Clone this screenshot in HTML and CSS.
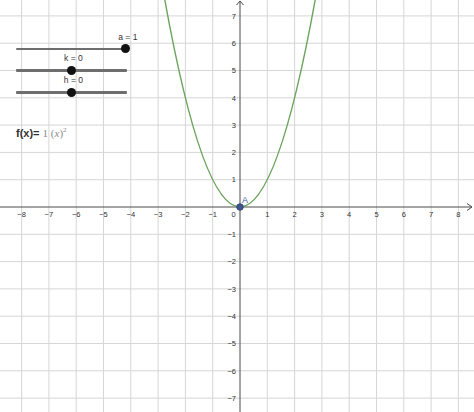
FILE: index.html
```html
<!DOCTYPE html>
<html>
<head>
<meta charset="utf-8">
<link rel="stylesheet" href="styles.css">
</head>
<body>
<div class="view">
  <svg class="graph" width="474" height="412" viewBox="0 0 474 412" xmlns="http://www.w3.org/2000/svg">
    <g class="grid">
      <line x1="21.6" y1="0" x2="21.6" y2="412"/>
      <line x1="48.9" y1="0" x2="48.9" y2="412"/>
      <line x1="76.2" y1="0" x2="76.2" y2="412"/>
      <line x1="103.5" y1="0" x2="103.5" y2="412"/>
      <line x1="130.8" y1="0" x2="130.8" y2="412"/>
      <line x1="158.1" y1="0" x2="158.1" y2="412"/>
      <line x1="185.4" y1="0" x2="185.4" y2="412"/>
      <line x1="212.7" y1="0" x2="212.7" y2="412"/>
      <line x1="267.3" y1="0" x2="267.3" y2="412"/>
      <line x1="294.6" y1="0" x2="294.6" y2="412"/>
      <line x1="321.9" y1="0" x2="321.9" y2="412"/>
      <line x1="349.2" y1="0" x2="349.2" y2="412"/>
      <line x1="376.5" y1="0" x2="376.5" y2="412"/>
      <line x1="403.8" y1="0" x2="403.8" y2="412"/>
      <line x1="431.1" y1="0" x2="431.1" y2="412"/>
      <line x1="458.4" y1="0" x2="458.4" y2="412"/>
      <line x1="0" y1="15.9" x2="474" y2="15.9"/>
      <line x1="0" y1="43.2" x2="474" y2="43.2"/>
      <line x1="0" y1="70.5" x2="474" y2="70.5"/>
      <line x1="0" y1="97.8" x2="474" y2="97.8"/>
      <line x1="0" y1="125.1" x2="474" y2="125.1"/>
      <line x1="0" y1="152.4" x2="474" y2="152.4"/>
      <line x1="0" y1="179.7" x2="474" y2="179.7"/>
      <line x1="0" y1="234.3" x2="474" y2="234.3"/>
      <line x1="0" y1="261.6" x2="474" y2="261.6"/>
      <line x1="0" y1="288.9" x2="474" y2="288.9"/>
      <line x1="0" y1="316.2" x2="474" y2="316.2"/>
      <line x1="0" y1="343.5" x2="474" y2="343.5"/>
      <line x1="0" y1="370.8" x2="474" y2="370.8"/>
      <line x1="0" y1="398.1" x2="474" y2="398.1"/>
    </g>
    <g class="axis">
      <line x1="0" y1="207" x2="472" y2="207"/>
      <polyline points="467,203.5 472,207 467,210.5"/>
      <line x1="240" y1="412" x2="240" y2="1"/>
      <polyline points="236.5,5 240,1 243.5,5"/>
    </g>
    <g class="xlabels">
      <text x="21.6" y="217">−8</text>
      <text x="48.9" y="217">−7</text>
      <text x="76.2" y="217">−6</text>
      <text x="103.5" y="217">−5</text>
      <text x="130.8" y="217">−4</text>
      <text x="158.1" y="217">−3</text>
      <text x="185.4" y="217">−2</text>
      <text x="212.7" y="217">−1</text>
      <text x="233.5" y="217">0</text>
      <text x="267.3" y="217">1</text>
      <text x="294.6" y="217">2</text>
      <text x="321.9" y="217">3</text>
      <text x="349.2" y="217">4</text>
      <text x="376.5" y="217">5</text>
      <text x="403.8" y="217">6</text>
      <text x="431.1" y="217">7</text>
      <text x="458.4" y="217">8</text>
    </g>
    <g class="ylabels">
      <text x="236" y="18.6">7</text>
      <text x="236" y="45.9">6</text>
      <text x="236" y="73.2">5</text>
      <text x="236" y="100.5">4</text>
      <text x="236" y="127.8">3</text>
      <text x="236" y="155.1">2</text>
      <text x="236" y="182.4">1</text>
      <text x="236" y="237">−1</text>
      <text x="236" y="264.3">−2</text>
      <text x="236" y="291.6">−3</text>
      <text x="236" y="318.9">−4</text>
      <text x="236" y="346.2">−5</text>
      <text x="236" y="373.5">−6</text>
      <text x="236" y="400.8">−7</text>
    </g>
    <path class="curve" d="M 163.56 -7.03 Q 240 421.03 316.44 -7.03"/>
    <circle class="point" cx="240" cy="207" r="3.3"/>
    <text class="plabel" x="242" y="203">A</text>
  </svg>

  <div class="panel">
    <div class="slider">
      <div class="slabel" style="margin-left: 99%">a = 1</div>
      <div class="track"><span class="thumb" style="left: 99%"></span></div>
    </div>
    <div class="slider">
      <div class="slabel" style="margin-left: 50%">k = 0</div>
      <div class="track"><span class="thumb" style="left: 50%"></span></div>
    </div>
    <div class="slider">
      <div class="slabel" style="margin-left: 50%">h = 0</div>
      <div class="track"><span class="thumb" style="left: 50%"></span></div>
    </div>
    <div class="formula"><span class="fname">f(x)=</span> <span class="fexpr">1 (<i>x</i>)<sup>2</sup></span></div>
  </div>
</div>
</body>
</html>
```
FILE: styles.css
```css
html, body {
  margin: 0;
  padding: 0;
  background: #ffffff;
}

.view {
  position: relative;
  width: 474px;
  height: 412px;
  overflow: hidden;
  font-family: "Liberation Sans", Arial, sans-serif;
}

.graph {
  display: block;
}

.grid line {
  stroke: #d6d6d6;
  stroke-width: 1;
}

.axis line,
.axis polyline {
  stroke: #4a4a4a;
  stroke-width: 1;
  fill: none;
}

.xlabels text,
.ylabels text {
  font-family: "Liberation Sans", Arial, sans-serif;
  font-size: 7.5px;
  fill: #333333;
}

.xlabels text {
  text-anchor: middle;
}

.ylabels text {
  text-anchor: end;
}

.curve {
  fill: none;
  stroke: #6aa35c;
  stroke-width: 1.4;
}

.point {
  fill: #42548f;
  stroke: #2e3c6e;
  stroke-width: 0.8;
}

.plabel {
  font-family: "Liberation Sans", Arial, sans-serif;
  font-size: 9px;
  fill: #4a5aa0;
}

.panel {
  position: absolute;
  left: 16px;
  top: 32.5px;
  width: 111px;
  display: flex;
  flex-direction: column;
  line-height: 8px;
  font-size: 8.5px;
}

.slider {
  display: flex;
  flex-direction: column;
  height: 21.7px;
}

.slabel {
  display: block;
  width: max-content;
  transform: translateX(-40%);
  font-size: 8.5px;
  line-height: 8px;
  height: 8px;
  color: #333333;
  white-space: nowrap;
}

.track {
  position: relative;
  margin-top: 7.2px;
  height: 2.6px;
  background: #6e6e6e;
  border-radius: 1px;
}

.thumb {
  position: absolute;
  top: 50%;
  width: 9px;
  height: 9px;
  margin-left: -4.5px;
  margin-top: -4.5px;
  border-radius: 50%;
  background: #111111;
}

.formula {
  margin-top: 29.5px;
  font-size: 11px;
  line-height: 12px;
  white-space: nowrap;
}

.fname {
  font-family: "Liberation Sans", Arial, sans-serif;
  font-weight: bold;
  color: #333333;
}

.fexpr {
  font-family: "Liberation Serif", "Times New Roman", serif;
  color: #8a8a8a;
  font-size: 11px;
}

.fexpr sup {
  font-size: 7px;
  vertical-align: 5px;
  line-height: 0;
}
```
